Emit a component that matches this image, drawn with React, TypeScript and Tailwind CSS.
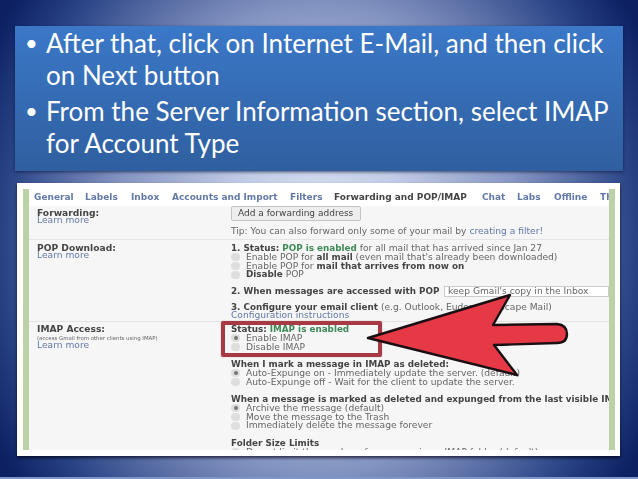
import type { ReactNode } from 'react'

const TABS = [
  { label: 'General', w: 'w-[51px]' },
  { label: 'Labels', w: 'w-[46px]' },
  { label: 'Inbox', w: 'w-[41px]' },
  { label: 'Accounts and Import', w: 'w-[118px]' },
  { label: 'Filters', w: 'w-[44px]' },
]

const TABS_AFTER = [
  { label: 'Chat', w: 'w-[35px]' },
  { label: 'Labs', w: 'w-[37px]' },
  { label: 'Offline', w: 'w-[46px]' },
  { label: 'Th', w: 'w-[10px]' },
]

function Line({ children, className = '' }: { children: ReactNode; className?: string }) {
  return <div className={`h-[8.8px] leading-[8.8px] whitespace-nowrap ${className}`}>{children}</div>
}

function Radio({ children, checked = false }: { children: ReactNode; checked?: boolean }) {
  return (
    <Line className="flex items-center">
      <span className="mr-[6px] flex h-[8px] w-[9px] shrink-0 items-center justify-center rounded-full bg-[#dedede]">
        {checked && <span className="h-[4px] w-[4px] rounded-full bg-[#777]" />}
      </span>
      <span>{children}</span>
    </Line>
  )
}

function Link({ children }: { children: ReactNode }) {
  return <span className="text-[#6279a8]">{children}</span>
}

function Strong({ children, green = false }: { children: ReactNode; green?: boolean }) {
  return <b className={`text-[8.8px] ${green ? 'text-[#3d8a55]' : 'text-[#444]'}`}>{children}</b>
}

function Bullet({ first, second }: { first: string; second: string }) {
  return (
    <div className="flex">
      <span className="w-[31px] shrink-0 pl-[10px] text-[22px]">•</span>
      <div className="whitespace-nowrap">
        <div>{first}</div>
        <div>{second}</div>
      </div>
    </div>
  )
}

function Arrow() {
  return (
    <svg className="absolute left-[362px] top-[290px] h-[92px] w-[212px] blur-[0.4px]" viewBox="362 290 212 92">
      <path
        d="M368 338 L510 295 L493 325 L557 324 Q567 325 567 334 Q567 343 557 343 L494 345 L517 375 Z"
        fill="#e63946"
        stroke="#1a1014"
        strokeWidth="2.4"
        strokeLinejoin="round"
      />
    </svg>
  )
}

export default function App() {
  return (
    <div className="relative h-[479px] w-[638px] overflow-hidden bg-[radial-gradient(ellipse_370px_420px_at_50%_50%,#dfe5f4_0%,#c0cbe5_25%,#8595c2_55%,#2a4486_85%,#0c2062_100%)] pt-[26px] font-['Liberation_Sans',sans-serif]">
      {/* titulo azul */}
      <div className="ml-[15px] h-[145px] w-[608px] bg-gradient-to-b from-[#3b78c8] to-[#2f5f9f] pt-[1px] font-['Lato',sans-serif] text-[26px] leading-[32px] text-white shadow-[0_1px_3px_rgba(10,20,60,0.7)]">
        <Bullet first="After that, click on Internet E-Mail, and then click" second="on Next button" />
        <div className="mt-[4px]">
          <Bullet first="From the Server Information section, select IMAP" second="for Account Type" />
        </div>
      </div>

      {/* captura do gmail */}
      <div className="ml-[17px] mt-[12px] h-[273px] w-[603px] bg-white pl-[6px] pr-[5px] pt-[6px] shadow-[0_2px_3px_rgba(0,0,20,0.7)]">
        <div className="h-[261px] overflow-hidden border-x-[6px] border-[#bcd2a6] bg-[#f6f6f6] font-['DejaVu_Sans',sans-serif] text-[9.15px] text-[#666] blur-[0.45px]">
          <div className="flex h-[17px] items-center bg-white pl-[5px] text-[9px] font-bold text-[#6279a8]">
            {TABS.map(t => (
              <span key={t.label} className={`${t.w} shrink-0 whitespace-nowrap`}>{t.label}</span>
            ))}
            <span className="w-[148px] shrink-0 whitespace-nowrap text-[#444]">Forwarding and POP/IMAP</span>
            {TABS_AFTER.map(t => (
              <span key={t.label} className={`${t.w} shrink-0 whitespace-nowrap`}>{t.label}</span>
            ))}
          </div>

          <div className="flex h-[34px] border-b border-[#e4e4e4] pl-[8px]">
            <div className="w-[194px] shrink-0 pt-[3px]">
              <Line className="font-bold text-[#444]">Forwarding:</Line>
              <Line className="-mt-[1.5px]"><Link>Learn more</Link></Line>
            </div>
            <div>
              <div className="flex h-[15px] w-[130px] items-center rounded-[2px] border border-[#c4c4c4] bg-[#eee] pl-[6px] whitespace-nowrap text-[9px] text-[#444]">
                Add a forwarding address
              </div>
              <Line className="mt-[6px]">Tip: You can also forward only some of your mail by <Link>creating a filter!</Link></Line>
            </div>
          </div>

          <div className="flex h-[82px] border-b border-[#e4e4e4] pl-[8px]">
            <div className="w-[194px] shrink-0 pt-[4px]">
              <Line className="font-bold text-[#444]">POP Download:</Line>
              <Line className="-mt-[1.5px]"><Link>Learn more</Link></Line>
            </div>
            <div className="pt-[4px]">
              <Line><Strong>1. Status: </Strong><Strong green>POP is enabled</Strong> for all mail that has arrived since Jan 27</Line>
              <Radio>Enable POP for <Strong>all mail</Strong> (even mail that's already been downloaded)</Radio>
              <Radio>Enable POP for <Strong>mail that arrives from now on</Strong></Radio>
              <Radio><Strong>Disable</Strong> POP</Radio>
              <div className="mt-[6.7px] flex h-[11px] items-center whitespace-nowrap">
                <span className="w-[213px] shrink-0"><Strong>2. When messages are accessed with POP</Strong></span>
                <span className="h-[11px] w-[165px] shrink-0 border border-[#ccc] bg-white pl-[3px] leading-[9px]">keep Gmail's copy in the Inbox</span>
              </div>
              <Line className="mt-[6px]"><Strong>3. Configure your email client</Strong> (e.g. Outlook, Eudora, Netscape Mail)</Line>
              <Line className="-mt-[0.5px]"><Link>Configuration instructions</Link></Line>
            </div>
          </div>

          <div className="relative flex pl-[8px]">
            <div className="w-[194px] shrink-0 pt-[3px]">
              <Line className="font-bold text-[#444]">IMAP Access:</Line>
              <Line className="text-[5.4px] text-[#666]">(access Gmail from other clients using IMAP)</Line>
              <Line className="-mt-[1.5px]"><Link>Learn more</Link></Line>
            </div>
            <div className="pt-[3px]">
              <Line><Strong>Status: </Strong><Strong green>IMAP is enabled</Strong></Line>
              <Radio checked>Enable IMAP</Radio>
              <Radio>Disable IMAP</Radio>
              <Line className="mt-[8.6px]"><Strong>When I mark a message in IMAP as deleted:</Strong></Line>
              <Radio checked>Auto-Expunge on - Immediately update the server. (default)</Radio>
              <Radio>Auto-Expunge off - Wait for the client to update the server.</Radio>
              <Line className="mt-[8.6px]"><Strong>When a message is marked as deleted and expunged from the last visible IMAP folder:</Strong></Line>
              <Radio checked>Archive the message (default)</Radio>
              <Radio>Move the message to the Trash</Radio>
              <Radio>Immediately delete the message forever</Radio>
              <Line className="mt-[8.8px]"><Strong>Folder Size Limits</Strong></Line>
              <Radio checked>Do not limit the number of messages in an IMAP folder (default)</Radio>
            </div>
          </div>
        </div>
      </div>

      {/* destaque vermelho sobre a captura */}
      <div className="absolute left-[221px] top-[321px] h-[36px] w-[161px] rounded-[2px] border-[4px] border-[#a83a46] shadow-[0_0_1px_rgba(80,0,0,0.6)]" />
      <Arrow />

      <div className="absolute bottom-0 left-0 h-[2px] w-full bg-[#7f97c6]" />
    </div>
  )
}
